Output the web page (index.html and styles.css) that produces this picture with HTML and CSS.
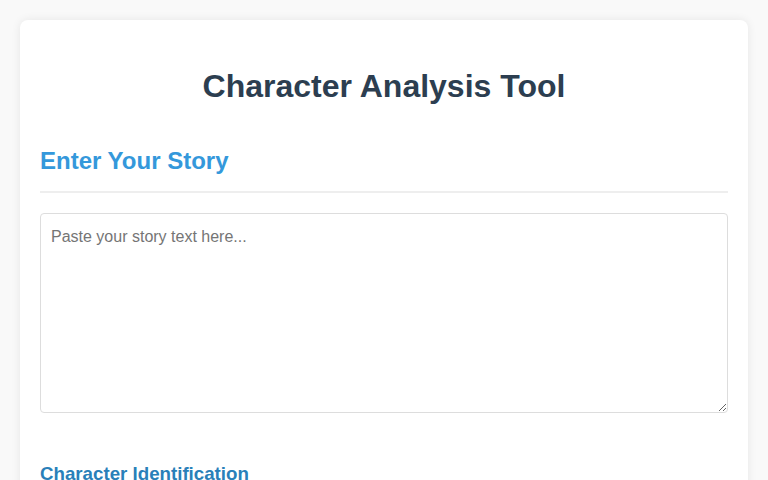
FILE: index.html
```html
<!DOCTYPE html>
<html lang="en">
<head>
    <meta charset="UTF-8">
    <meta name="viewport" content="width=device-width, initial-scale=1.0">
    <title>Character Analysis Tool</title>
    <link rel="stylesheet" href="styles.css">
</head>
<body>
    <div class="container">
        <h1>Character Analysis Tool</h1>

        <div class="section">
            <h2>Enter Your Story</h2>
            <textarea id="storyText" placeholder="Paste your story text here..."></textarea>
        </div>

        <div class="section">
            <h3>Character Identification</h3>
        </div>
    </div>
</body>
</html>
```

FILE: styles.css
```css
* {
    box-sizing: border-box;
}

body {
    font-family: "Liberation Sans", Arial, sans-serif;
    line-height: 1.6;
    background: #f9f9f9;
    margin: 0;
    padding: 20px;
    color: #333;
}

.container {
    background: white;
    border-radius: 8px;
    box-shadow: 0 0 10px rgba(0,0,0,0.08);
    padding: 20px;
    min-height: 600px;
}

h1 {
    text-align: center;
    color: #2c3e50;
    font-size: 32px;
    margin: 21px 0;
}

h2 {
    color: #3498db;
    font-size: 24px;
    margin: 30px 0 20px;
    padding-bottom: 10px;
    border-bottom: 2px solid #eee;
}

h3 {
    color: #2980b9;
    font-size: 1.17em;
    margin: 0;
}

textarea {
    display: block;
    width: 100%;
    height: 200px;
    padding: 10px;
    margin-bottom: 46px;
    border: 1px solid #ddd;
    border-radius: 4px;
    font: inherit;
    color: #333;
    resize: vertical;
}

textarea::placeholder {
    color: #757575;
}
```
